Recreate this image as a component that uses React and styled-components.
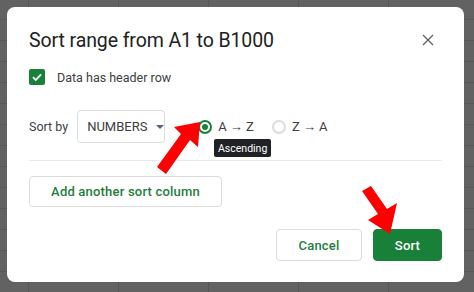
import React from 'react';
import styled, { createGlobalStyle } from 'styled-components';

const Global = createGlobalStyle`
	html, body {
		margin: 0;
		padding: 0;
	}
	body {
		font-family: Roboto, "Liberation Sans", Arial, sans-serif;
	}
`;

const green = '#188038';

const Screen = styled.div`
	position: relative;
	width: 474px;
	height: 292px;
	overflow: hidden;
	box-sizing: border-box;
	padding: 7px 10px 10px 7px;
	background-color: #626262;
	background-image:
		linear-gradient(to right, #565656 1px, transparent 1px),
		linear-gradient(to bottom, #575757 1px, transparent 1px);
	background-size: 90px 100%, 100% 21px;
	background-position: 28px 0, 0 19px;
`;

const Dialog = styled.div`
	width: 457px;
	height: 275px;
	box-sizing: border-box;
	background: #fff;
	border-radius: 8px;
	padding: 0 22px;
	display: flex;
	flex-direction: column;
`;

const Header = styled.div`
	display: flex;
	align-items: center;
	justify-content: space-between;
	height: 24px;
	margin-top: 21px;
`;

const Title = styled.h2`
	margin: 0;
	font-size: 19.5px;
	font-weight: 400;
	color: #202124;
	letter-spacing: -0.1px;
`;

const Close = styled.button`
	border: 0;
	background: none;
	padding: 0;
	width: 12px;
	height: 12px;
	margin-right: 8px;
	display: flex;
	color: #5f6368;
`;

const CheckRow = styled.label`
	display: flex;
	align-items: center;
	gap: 12px;
	margin-top: 17px;
	font-size: 12.5px;
	color: #3c4043;
`;

const Box = styled.span`
	width: 16px;
	height: 16px;
	border-radius: 2px;
	background: ${green};
	display: flex;
	align-items: center;
	justify-content: center;
`;

const SortRow = styled.div`
	display: flex;
	align-items: center;
	margin-top: 25px;
	height: 33px;
	position: relative;
`;

const Label = styled.span`
	font-size: 12.5px;
	color: #3c4043;
	margin-right: 9px;
`;

const Select = styled.div`
	width: 88px;
	height: 33px;
	box-sizing: border-box;
	border: 1px solid #dadce0;
	border-radius: 4px;
	display: flex;
	align-items: center;
	padding-left: 9px;
	font-size: 13px;
	color: #3c4043;
	gap: 9px;
`;

const Caret = styled.span`
	width: 0;
	height: 0;
	border-left: 4px solid transparent;
	border-right: 4px solid transparent;
	border-top: 4px solid #5f6368;
`;

const Radio = styled.label`
	display: flex;
	align-items: center;
	gap: 6px;
	font-size: 13px;
	color: #3c4043;
	margin-left: ${p => p.$first ? '33px' : '18px'};
`;

const Dot = styled.span`
	width: 14px;
	height: 14px;
	box-sizing: border-box;
	border-radius: 50%;
	border: 2px solid ${p => p.$on ? green : '#dadce0'};
	display: flex;
	align-items: center;
	justify-content: center;
	&::after {
		content: '';
		width: 6px;
		height: 6px;
		border-radius: 50%;
		background: ${p => p.$on ? green : 'transparent'};
	}
`;

const Tooltip = styled.div`
	position: absolute;
	left: 185px;
	top: 29px;
	height: 18px;
	padding: 0 4px;
	background: #202124;
	color: #fff;
	font-size: 10.5px;
	display: flex;
	align-items: center;
	border-radius: 2px;
`;

const Divider = styled.div`
	height: 1px;
	background: #e8eaed;
	margin-top: 17px;
`;

const Button = styled.button`
	box-sizing: border-box;
	height: ${p => p.$h || 32}px;
	width: ${p => p.$w}px;
	border-radius: 4px;
	border: 1px solid ${p => p.$primary ? green : '#dadce0'};
	background: ${p => p.$primary ? green : '#fff'};
	color: ${p => p.$primary ? '#fff' : '#1e7e3e'};
	font-family: Roboto, "Liberation Sans", Arial, sans-serif;
	font-size: 13px;
	font-weight: 500;
	letter-spacing: 0.2px;
	padding: 0;
`;

const AddWrap = styled.div`
	margin-top: 15px;
`;

const Footer = styled.div`
	display: flex;
	justify-content: flex-end;
	gap: 11px;
	margin-top: 22px;
`;

const Arrows = styled.svg`
	position: absolute;
	left: 0;
	top: 0;
	pointer-events: none;
`;

const App = () => {
	return (
		<Screen>
			<Global />
			<Dialog>
				<Header>
					<Title>Sort range from A1 to B1000</Title>
					<Close aria-label="Close">
						<svg width="12" height="12" viewBox="0 0 12 12">
							<path d="M1 1L11 11M11 1L1 11" stroke="currentColor" strokeWidth="1.4" />
						</svg>
					</Close>
				</Header>
				<CheckRow>
					<Box>
						<svg width="12" height="12" viewBox="0 0 12 12">
							<path d="M2 6.2L4.8 9L10 3.4" stroke="#fff" strokeWidth="1.8" fill="none" />
						</svg>
					</Box>
					Data has header row
				</CheckRow>
				<SortRow>
					<Label>Sort by</Label>
					<Select>NUMBERS <Caret /></Select>
					<Radio $first><Dot $on />A → Z</Radio>
					<Radio><Dot />Z → A</Radio>
					<Tooltip>Ascending</Tooltip>
				</SortRow>
				<Divider />
				<AddWrap>
					<Button $w={193} $h={31}>Add another sort column</Button>
				</AddWrap>
				<Footer>
					<Button $w={86}>Cancel</Button>
					<Button $w={69} $primary>Sort</Button>
				</Footer>
			</Dialog>
			<Arrows width="474" height="292" viewBox="0 0 474 292">
				<polygon points="200,122 198,147 190,140 166,174 157,167 181,134 174,127" fill="#f00" />
				<polygon points="390,234 368,220 378,214 362,191 371,186 387,209 397,203" fill="#f00" />
			</Arrows>
		</Screen>
	);
};

export default App;
